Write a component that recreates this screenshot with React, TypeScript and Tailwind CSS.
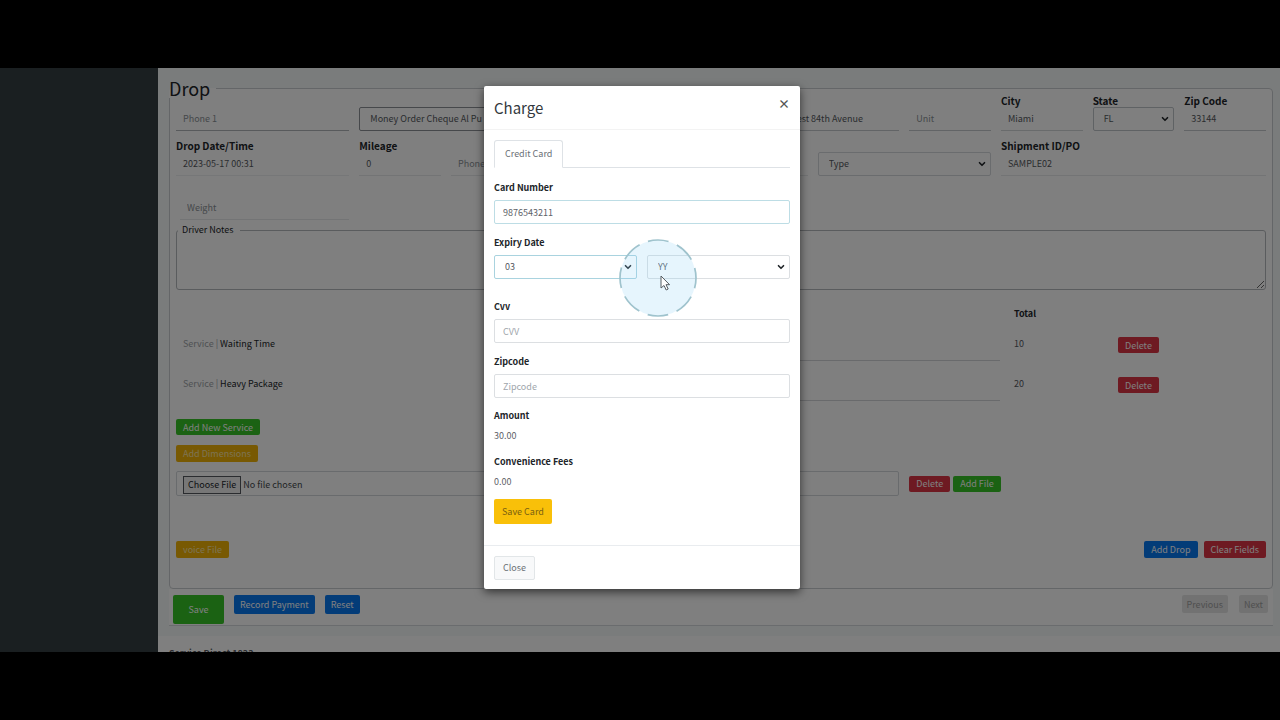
import { ChevronDown } from 'lucide-react';
import { clsx } from 'clsx';
import type { ReactNode } from 'react';

const services = [
    { name: 'Waiting Time', total: '10' },
    { name: 'Heavy Package', total: '20' },
];

const tones = {
    green: 'bg-[#36c426] text-white',
    yellow: 'bg-[#f0b306] text-[#fbe6a8]',
    red: 'bg-[#dc3545] text-white',
    blue: 'bg-[#0678f0] text-white',
    gray: 'bg-[#e4e4e4] text-[#a0a0a0]',
};

function Btn({ tone, className = 'h-4 px-[7px]', children }: { tone: keyof typeof tones; className?: string; children: ReactNode }) {
    return (
        <button type="button" className={clsx('rounded-[2px] text-[9px] leading-none whitespace-nowrap', tones[tone], className)}>
            {children}
        </button>
    );
}

const fieldLabel = 'h-3 text-[10px] leading-3 font-bold text-[#212529] whitespace-nowrap';

function Field({ label, name, value, placeholder, className }: { label?: string; name: string; value?: string; placeholder?: string; className?: string }) {
    return (
        <div className={clsx('flex flex-col justify-end', className)}>
            {label && <label htmlFor={name} className={fieldLabel}>{label}</label>}
            <input
                id={name}
                aria-label={label ?? name}
                defaultValue={value}
                placeholder={placeholder}
                className="w-full h-6 px-[7px] border-b border-inherit text-[9px] text-[#55595e] placeholder:text-[#8a9095]"
            />
        </div>
    );
}

function Select({ id, label, options, className }: { id: string; label: string; options: string[]; className?: string }) {
    return (
        <div className={clsx('relative', className)}>
            <select id={id} aria-label={label} className="appearance-none block w-full h-full pl-[10px] pr-5 rounded-[2px] border border-inherit text-[9px] text-[#55595e]">
                {options.map((o) => <option key={o}>{o}</option>)}
            </select>
            <ChevronDown className="absolute right-1 top-1/2 -translate-y-1/2 size-2.5 text-[#212529] pointer-events-none" strokeWidth={4} />
        </div>
    );
}

function DropForm() {
    return (
        <fieldset className="h-[511px] px-[6px] border border-[#c9cdd0] rounded-[4px] bg-white min-w-0">
            <legend className="-ml-[7px] pr-[6px] text-[18px] leading-5 text-[#212529]">Drop</legend>

            {/* Address */}
            <div className="-mt-[3px] grid grid-cols-12 gap-x-2.5 h-8">
                <Field name="Phone 1" placeholder="Phone 1" className="col-span-2 border-[#b0b4b8]" />
                <Select id="company" label="Company" options={['Money Order Cheque Al Pu']} className="col-span-3 h-6 self-end border-[#8c9196]" />
                <Field name="Address" value="7900 Southwest 84th Avenue" className="col-span-3 pl-[101px] border-[#c4c8cc]" />
                <Field name="Unit" placeholder="Unit" className="border-[#c4c8cc]" />
                <Field label="City" name="city" value="Miami" className="border-[#d2d6d9]" />
                <div className="flex flex-col justify-end">
                    <label htmlFor="state" className={fieldLabel}>State</label>
                    <Select id="state" label="State" options={['FL']} className="h-6 border-[#bfc4c9]" />
                </div>
                <Field label="Zip Code" name="zip" value="33144" className="border-[#c4c8cc]" />
            </div>

            {/* Shipment */}
            <div className="grid grid-cols-12 gap-x-2.5 h-[49px]">
                <Field label="Drop Date/Time" name="date" value="2023-05-17 00:31" className="col-span-2 border-[#eceef0]" />
                <Field label="Mileage" name="mileage" value="0" className="border-[#e6e8ea]" />
                <Field name="Phone" placeholder="Phone" className="col-span-4 border-[#e6e8ea]" />
                <Select id="type" label="Type" options={['Type']} className="col-span-2 h-6 self-end border-[#d4d8dc]" />
                <Field label="Shipment ID/PO" name="shipment" value="SAMPLE02" className="col-span-3 border-[#e6e8ea]" />
            </div>
            <div className="grid grid-cols-12 gap-x-2.5 h-11">
                <Field name="Weight" placeholder="Weight" className="col-span-2 pl-1 border-[#e6e8ea]" />
            </div>

            <fieldset className="mt-1 h-[66px] border border-[#b4b8bc] rounded-[3px] min-w-0">
                <legend className="ml-px pl-1 pr-[6px] text-[9px] leading-3 text-[#212529]">
                    <label htmlFor="notes">Driver Notes</label>
                </legend>
                <textarea id="notes" className="block w-full h-[53px] px-2 resize-y text-[9px]" />
            </fieldset>

            {/* Services */}
            <table className="mt-[13px] w-full table-fixed text-left text-[9px] text-[#55595e]">
                <thead>
                    <tr className="h-[22px]">
                        <th className="w-[458px]" aria-label="Service" />
                        <th className="w-[366px]" aria-label="Price" />
                        <th className="w-[118px] pl-[14px] font-bold text-[#212529]">Total</th>
                        <th aria-label="Actions" />
                    </tr>
                </thead>
                <tbody>
                    {services.map((s) => (
                        <tr key={s.name} className="h-10">
                            <td className="pl-[7px] pb-[3px]">
                                <span className="text-[#a0a4a8]">Service | </span>
                                <span className="text-[#212529]">{s.name}</span>
                            </td>
                            <td>
                                <input aria-label={`${s.name} price`} className="block w-full h-8 border-b border-[#d2d5d8]" />
                            </td>
                            <td className="pl-[14px] pb-[3px]">{s.total}</td>
                            <td><Btn tone="red">Delete</Btn></td>
                        </tr>
                    ))}
                </tbody>
            </table>

            <div className="mt-[14px] flex flex-col items-start gap-[10px]">
                <Btn tone="green">Add New Service</Btn>
                <Btn tone="yellow" className="h-[17px] px-[7px]">Add Dimensions</Btn>
            </div>

            {/* Attachments */}
            <div className="mt-[9px] grid grid-cols-12 gap-x-2.5 items-center">
                <input
                    type="file"
                    aria-label="Attachment"
                    className="col-span-8 h-[25px] pl-[6px] pt-1 border border-[#d3d7db] rounded-[2px] text-[9px] leading-4 text-[#45494d] file:h-[18px] file:px-1 file:mr-0.5 file:border file:border-solid file:border-[#55595e] file:bg-[#efefef] file:leading-4 file:text-[#212529]"
                />
                <div className="col-span-4 flex gap-[3px]">
                    <Btn tone="red">Delete</Btn>
                    <Btn tone="green">Add File</Btn>
                </div>
            </div>
            <div className="mt-[45px] flex gap-[6px]">
                <Btn tone="yellow" className="h-[17px] px-[7px] mr-auto">voice File</Btn>
                <Btn tone="blue" className="h-[17px] px-[7px]">Add Drop</Btn>
                <Btn tone="red" className="h-[17px] px-[7px]">Clear Fields</Btn>
            </div>
        </fieldset>
    );
}

const modalInput = 'block w-full h-6 px-2 rounded-[2px] border text-[9px] text-[#5d6268] placeholder:text-[#a0a6ac]';
const modalLabel = 'block text-[9px] leading-4 font-bold text-[#212529]';

function ChargeModal() {
    return (
        <div role="dialog" aria-label="Charge" className="relative w-[316px] h-[503px] flex flex-col rounded-[2px] bg-white text-[9px] shadow-[0_3px_10px_rgba(0,0,0,0.6)]">
            <header className="h-11 px-[10px] flex items-center border-b border-[#f3f3f3]">
                <h2 className="text-[15px] leading-5 text-[#33383d]">Charge</h2>
                <button type="button" aria-label="Close dialog" className="ml-auto mb-2 text-[12px] leading-4 font-bold text-[#555]">×</button>
            </header>

            <form className="flex-1 px-[10px] pt-[10px]">
                <div className="flex border-b border-[#dee2e6]">
                    <button type="button" className="h-7 px-[10px] -mb-px rounded-t-[3px] border border-[#dee2e6] border-b-white bg-white text-[#6a7076]">Credit Card</button>
                </div>

                <label htmlFor="card" className={clsx(modalLabel, 'mt-3 mb-1')}>Card Number</label>
                <input id="card" defaultValue="9876543211" className={clsx(modalInput, 'border-[#bddde5]')} />

                <label htmlFor="month" className={clsx(modalLabel, 'mt-[11px] mb-1')}>Expiry Date</label>
                <div className="grid grid-cols-2 gap-x-[10px]">
                    <Select id="month" label="Expiry month" options={['03']} className="h-6 border-[#a9d3df]" />
                    <Select id="year" label="Expiry year" options={['YY']} className="h-6 border-[#dcdfe2]" />
                </div>

                <label htmlFor="cvv" className={clsx(modalLabel, 'mt-5 mb-1')}>Cvv</label>
                <input id="cvv" placeholder="CVV" className={clsx(modalInput, 'border-[#dcdfe2]')} />

                <label htmlFor="zipcode" className={clsx(modalLabel, 'mt-[11px] mb-1')}>Zipcode</label>
                <input id="zipcode" placeholder="Zipcode" className={clsx(modalInput, 'border-[#dcdfe2]')} />

                <p className={clsx(modalLabel, 'mt-[10px]')}>Amount</p>
                <p className="mt-1 leading-4 text-[#5d6268]">30.00</p>
                <p className={clsx(modalLabel, 'mt-[10px]')}>Convenience Fees</p>
                <p className="mt-1 leading-4 text-[#5d6268]">0.00</p>

                <button type="button" className="mt-[9px] h-[25px] px-2 rounded-[2px] bg-[#f9c009] text-[#7a6112]">Save Card</button>
            </form>

            <footer className="h-11 px-[10px] flex items-center border-t border-[#e9ecef]">
                <button type="button" className="h-6 px-2 rounded-[2px] border border-[#e2e6e8] bg-[#f8f9fa] text-[#6a7076]">Close</button>
            </footer>

            {/* Click highlight and pointer */}
            <svg className="absolute left-[134px] top-[152px] size-20 pointer-events-none" viewBox="0 0 80 80" fill="none">
                <circle cx="40" cy="40" r="38" fill="#8fd0f5" fillOpacity="0.22" />
                <circle cx="40" cy="40" r="38" stroke="#9fc3cd" strokeWidth="1.7" strokeDasharray="20.8 9.04" strokeDashoffset="10.4" />
                <path d="M43 38v12l3-2.5 2.2 4.5 2-1-2.2-4.3h3.6z" fill="#fff" stroke="#555c62" strokeWidth="1" strokeLinejoin="round" />
            </svg>
        </div>
    );
}

export default function App() {
    return (
        <div className="h-screen py-17 bg-black font-['Noto_Sans_CJK_JP','Noto_Sans',sans-serif]">
            <div className="relative h-full flex overflow-hidden bg-[#f4f9f9]">
                <aside className="w-[158px] shrink-0 bg-[#343f42]" />

                <main className="flex-1 min-w-0 pl-[11px] pr-[7px] pt-[10px]">
                    <DropForm />
                    <div className="h-[37px] pl-1 pr-[5px] pt-[6px] flex items-start bg-white border-b border-[#d5d9dc]">
                        <Btn tone="green" className="h-[29px] w-[51px]">Save</Btn>
                        <Btn tone="blue" className="ml-[10px] h-[19px] px-[6px]">Record Payment</Btn>
                        <Btn tone="blue" className="ml-[10px] h-[19px] px-[6px]">Reset</Btn>
                        <Btn tone="gray" className="ml-auto h-[18px] px-[5px]">Previous</Btn>
                        <Btn tone="gray" className="ml-[11px] h-[18px] px-[5px]">Next</Btn>
                    </div>
                    <footer className="-mx-[11px] mt-[10px] px-[11px] pt-[10px] bg-white text-[9px] leading-4 font-bold text-[#55595e]">Service Direct 1823</footer>
                </main>

                <div className="absolute inset-0 pl-1 pt-[18px] flex justify-center items-start bg-black/50">
                    <ChargeModal />
                </div>
            </div>
        </div>
    );
}
